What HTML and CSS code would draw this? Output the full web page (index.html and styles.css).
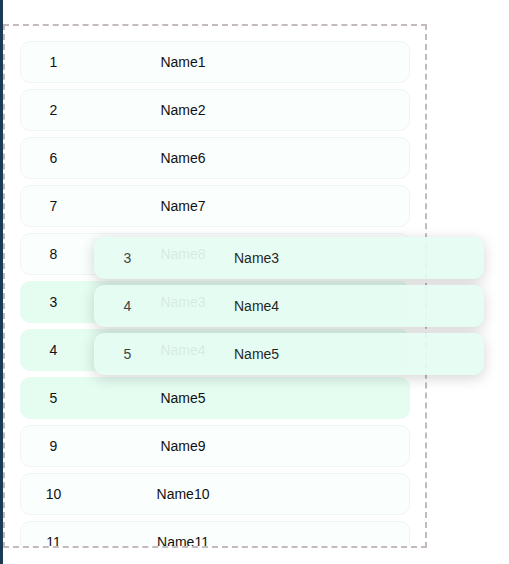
FILE: index.html
```html
<!DOCTYPE html>
<html lang="en">
<head>
	<meta name="viewport" content="width=device-width, initial-scale=1">
	<title>Sortable List</title>
	<link rel="stylesheet" href="styles.css">
</head>
<body>
<div class="page">
	<div class="edge"></div>
	<div class="stage">
		<div class="list">
			<div class="row"><span class="id">1</span><span class="name">Name1</span></div>
			<div class="row"><span class="id">2</span><span class="name">Name2</span></div>
			<div class="row"><span class="id">6</span><span class="name">Name6</span></div>
			<div class="row"><span class="id">7</span><span class="name">Name7</span></div>
			<div class="row"><span class="id">8</span><span class="name">Name8</span></div>
			<div class="row selected"><span class="id">3</span><span class="name">Name3</span></div>
			<div class="row selected"><span class="id">4</span><span class="name">Name4</span></div>
			<div class="row selected"><span class="id">5</span><span class="name">Name5</span></div>
			<div class="row"><span class="id">9</span><span class="name">Name9</span></div>
			<div class="row"><span class="id">10</span><span class="name">Name10</span></div>
			<div class="row"><span class="id">11</span><span class="name">Name11</span></div>
		</div>

		<div class="drag-overlay">
			<div class="row dragging"><span class="id">3</span><span class="name">Name3</span></div>
			<div class="row dragging"><span class="id">4</span><span class="name">Name4</span></div>
			<div class="row dragging"><span class="id">5</span><span class="name">Name5</span></div>
		</div>
	</div>
</div>
</body>
</html>
```

FILE: styles.css
```css
* {
	box-sizing: border-box;
	margin: 0;
	padding: 0;
}

html, body {
	height: 100%;
	background: #fff;
}

body {
	font-family: 'Liberation Sans', Arial, sans-serif;
	font-size: 14px;
	color: #111;
	overflow: hidden;
}

.page {
	display: flex;
	height: 100%;
}

.edge {
	width: 3px;
	flex-shrink: 0;
	background: #1c3a52;
}

.stage {
	position: relative;
	padding-top: 24px;
}

.list {
	width: 424px;
	height: 524px;
	padding: 15px;
	border: 2px dashed #c2babd;
	overflow: hidden;
	display: flex;
	flex-direction: column;
	gap: 6px;
}

.row {
	display: flex;
	align-items: center;
	flex-shrink: 0;
	width: 390px;
	height: 42px;
	border: 1px solid #f1f4f4;
	border-radius: 10px;
	background: #fafefd;
}

.row .id {
	width: 65px;
	text-align: center;
}

.row .name {
	width: 194px;
	text-align: center;
}

.row.selected {
	background: #e5fcf1;
	border-color: #e5fcf1;
}

.drag-overlay {
	position: absolute;
	left: 91px;
	top: 237px;
	display: flex;
	flex-direction: column;
	gap: 6px;
	opacity: 0.92;
}

.row.dragging {
	background: #e6fdf3;
	border-color: #e6fdf3;
	box-shadow: 0 3px 14px rgba(0,0,0,0.18);
}

.row.dragging .id {
	color: #333;
}

.row.dragging .name {
	width: 80px;
	margin-left: 74px;
	text-align: left;
}
```
